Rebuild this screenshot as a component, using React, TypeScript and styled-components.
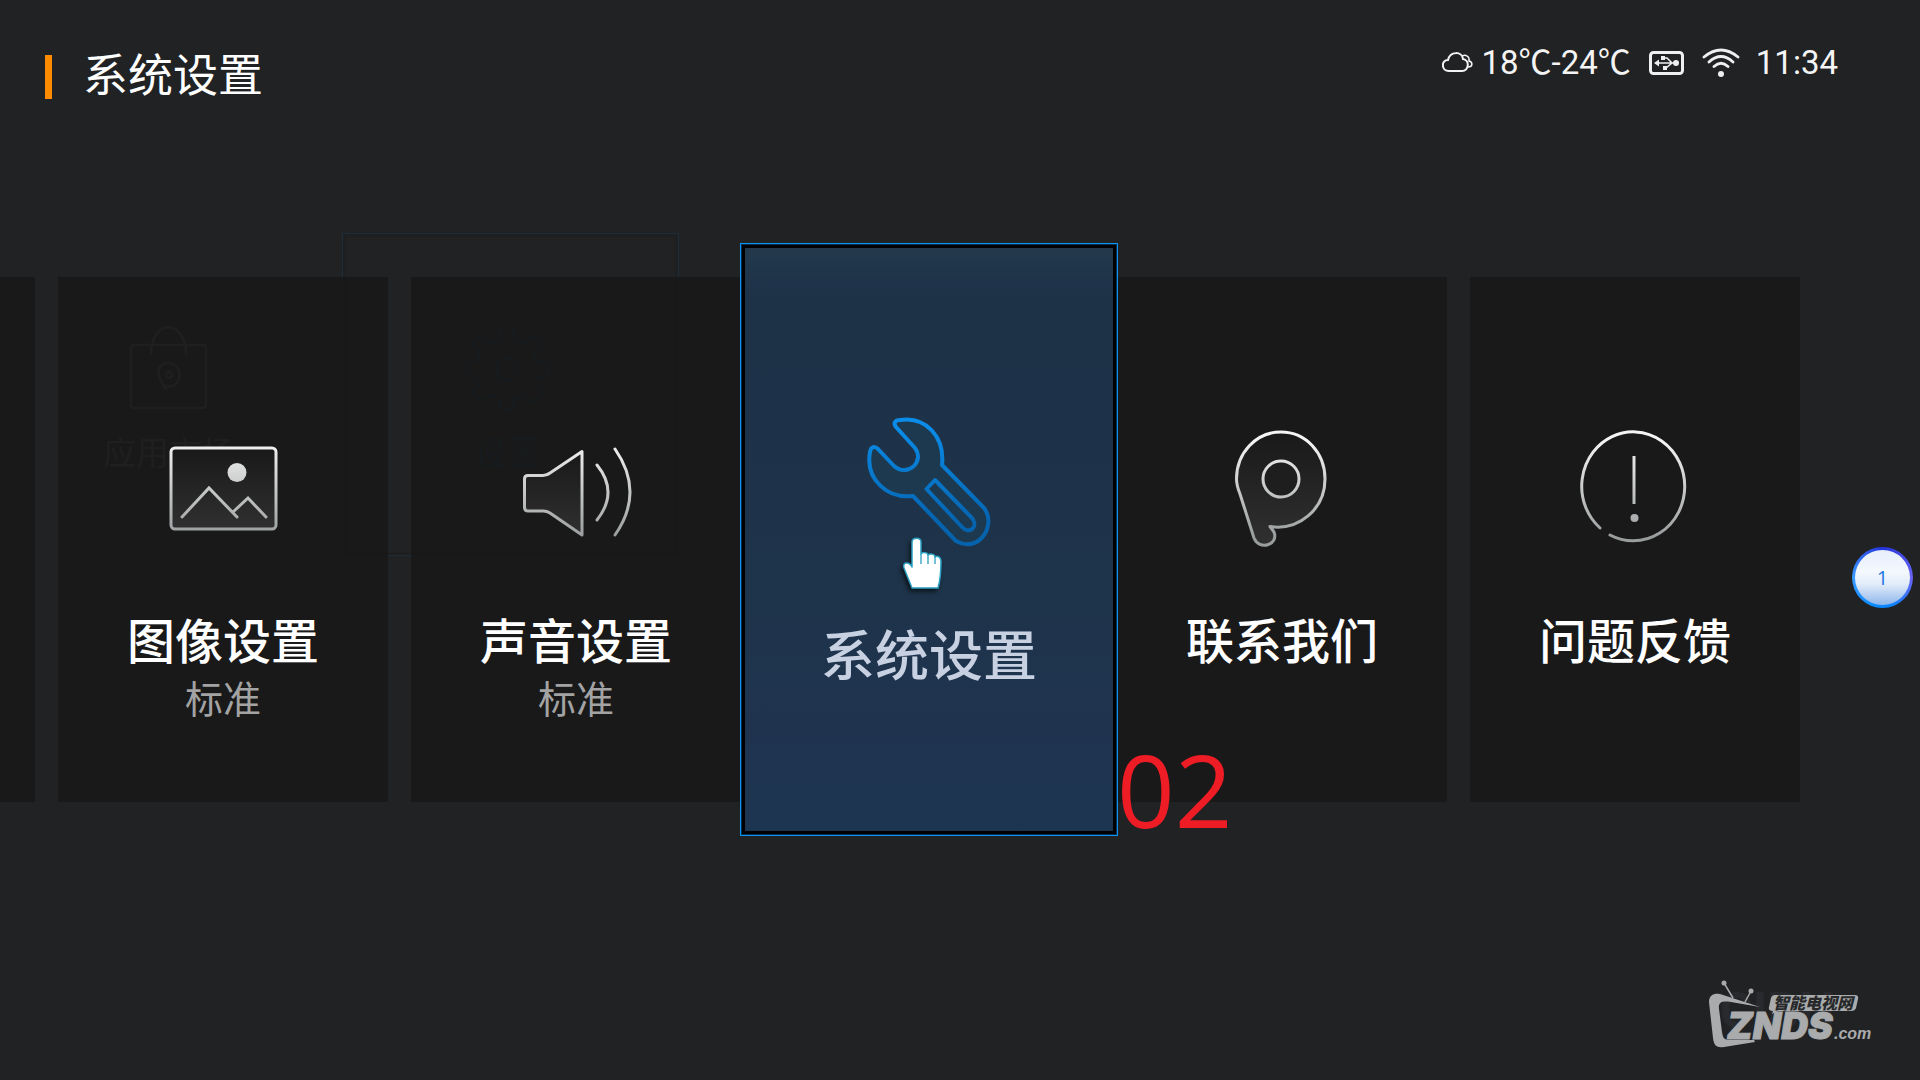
import React from "react";
import styled, { createGlobalStyle } from "styled-components";

const GlobalStyle = createGlobalStyle`
  *, *::before, *::after { box-sizing: border-box; }
  body {
    margin: 0;
    background: #212224;
    color: #fff;
    font-family: Roboto, "Noto Sans CJK SC", sans-serif;
  }
  button { font: inherit; color: inherit; }
`;

const Screen = styled.main`
  position: relative;
  display: flex;
  flex-direction: column;
  min-height: 100vh;
  overflow: hidden;
  background: #212224;
`;

const Header = styled.header`
  display: flex;
  justify-content: space-between;
  align-items: flex-start;
  padding: 45px 82px 0 45px;
  height: 243px;
`;

const Heading = styled.h1`
  display: flex;
  align-items: center;
  gap: 31px;
  margin: 0;
  font-size: 45px;
  font-weight: 400;
  line-height: 64px;

  &::before {
    content: "";
    width: 7px;
    height: 44px;
    background: #ff8c00;
  }
`;

const Status = styled.div`
  display: flex;
  align-items: center;
  font-size: 33px;
  line-height: 36px;
  color: #f4f4f4;
`;

const Weather = styled.div`
  display: flex;
  align-items: center;
  gap: 8px;
  margin-right: 18px;
`;

const UsbSlot = styled.span`
  display: flex;
  margin-right: 18px;
`;

const WifiSlot = styled.span`
  display: flex;
  margin-right: 16px;
`;

const Carousel = styled.nav`
  position: relative;
  display: flex;
  justify-content: flex-end;
  align-items: center;
  gap: 23px;
  padding-right: 120px;
`;

const Tile = styled.button`
  position: relative;
  display: flex;
  flex: none;
  flex-direction: column;
  align-items: center;
  width: 330px;
  height: 525px;
  padding: 144px 0 0;
  border: 0;
  background: rgba(24, 24, 24, 0.94);
`;

const IconBox = styled.span`
  display: flex;
  align-items: center;
  justify-content: center;
  height: 136px;
  margin-bottom: 56px;
`;

const FocusedTile = styled(Tile)`
  z-index: 1;
  width: 378px;
  height: 593px;
  margin: 0 -24px;
  padding: 172px 0 0;
  border: 1px solid #0a93f5;
  background: linear-gradient(#243a4b 0, #20364b 20px, #1d3147 60px, #1e344a 350px, #1f334f 490px, #1c3550 100%);
  box-shadow: inset 0 0 0 1px #06304f, inset 0 0 0 4px #000;

  ${IconBox} {
    margin-bottom: 76px;
  }
`;

const Label = styled.span<{ $focused?: boolean }>`
  font-size: ${(p) => (p.$focused ? "54px" : "48px")};
  font-weight: 500;
  line-height: 60px;
  color: ${(p) => (p.$focused ? "#c8d1e2" : "#fff")};
`;

const Value = styled.span`
  font-size: 38px;
  line-height: 54px;
  color: #a3a3a3;
`;

const Ghost = styled.div`
  position: absolute;
  top: -10px;
  left: 342px;
  width: 337px;
  height: 323px;
  border: 1px solid #1c2e3b;
  box-shadow: inset 0 0 0 3px #1e1f21;
`;

const GhostItem = styled.div<{ $left: number; $tint: string }>`
  position: absolute;
  top: 83px;
  left: ${(p) => p.$left}px;
  display: flex;
  flex-direction: column;
  align-items: center;
  gap: 20px;
  width: 140px;
  font-size: 33px;
  line-height: 48px;
  color: ${(p) => p.$tint};
`;

const Pointer = styled.svg`
  position: absolute;
  z-index: 2;
  top: 534px;
  left: 898px;
  filter: drop-shadow(-2px 3px 2px rgba(0, 0, 0, 0.6));
`;

const StepNumber = styled.strong`
  position: absolute;
  z-index: 2;
  top: 719px;
  left: 1117px;
  font-family: "Open Sans", "Noto Sans", sans-serif;
  font-size: 101px;
  font-weight: 400;
  line-height: 140px;
  color: #ee1c25;
`;

const FloatingBadge = styled.button`
  position: absolute;
  top: 547px;
  right: 7px;
  display: grid;
  place-items: center;
  width: 61px;
  height: 61px;
  padding: 0;
  border: 3px solid transparent;
  border-radius: 50%;
  background:
    linear-gradient(#e6effc 0, #f4f8fe 40%, #e2ecfa 62%, #8fb6ea 100%) padding-box,
    conic-gradient(#2334dc 0, #6a63f2 25%, #0b84ff 45%, #0b8cff 55%, #3a9bff 75%, #2334dc 100%) border-box;
  font-family: "Open Sans", sans-serif;
  font-size: 20px;
  line-height: 28px;
  color: #2478e4;
`;

const Watermark = styled.div`
  position: absolute;
  right: 40px;
  bottom: 24px;
  display: flex;
`;

const Metal = ({ id, from = "#f4f4f4", to = "#9a9d9e" }: { id: string; from?: string; to?: string }) => (
  <defs>
    <linearGradient id={id} x1="0" y1="0" x2="0" y2="120" gradientUnits="userSpaceOnUse">
      <stop offset="0.1" stopColor={from} />
      <stop offset="0.9" stopColor={to} />
    </linearGradient>
    <linearGradient id={id + "-fill"} x1="0" y1="0" x2="0" y2="1">
      <stop offset="0" stopColor="#191919" />
      <stop offset="1" stopColor="#303030" />
    </linearGradient>
  </defs>
);

const PictureIcon = () => (
  <svg width="120" height="120" viewBox="0 0 120 120" fill="none" stroke="url(#pic)" strokeWidth="3" strokeLinecap="round">
    <Metal id="pic" />
    <rect x="8" y="19" width="105" height="81" rx="4" fill="url(#pic-fill)" />
    <circle cx="74" cy="43.5" r="9.5" fill="url(#pic)" stroke="none" />
    <path d="M19 88L46 59L74 88M70 83L85 69L103 88" />
  </svg>
);

const SoundIcon = () => (
  <svg width="120" height="120" viewBox="0 0 120 120" fill="none" stroke="url(#snd)" strokeWidth="3" strokeLinecap="round" strokeLinejoin="round">
    <Metal id="snd" />
    <path d="M12 46.5H27Q31 46.5 34 44L66 22.5V106L34 84Q31 82 27 82H12Q8.5 82 8.5 78V50Q8.5 46.5 12 46.5Z" fill="url(#snd-fill)" />
    <path d="M81 36Q103 63 81 91M99 20Q129 63 99 106" />
  </svg>
);

const WrenchIcon = () => (
  <svg width="126" height="136" viewBox="0 0 126 136" fill="none" stroke="url(#wr)" strokeWidth="4" strokeLinejoin="round">
    <Metal id="wr" from="#0a8ce8" to="#0563ae" />
    <path d="M30 11C27 7 29 4 34 4C60 0 79 21 76 49L118 92C131 109 113 138 90 125L47 80C22 83 -1 64 4 36C5 30 9 30 12 33L28 50C42 62 59 45 49 32Z" fill="#1c394f" />
    <path d="M60.5 73L69 64L106 102C113 111 103 119 96 111Z" />
  </svg>
);

const ContactIcon = () => (
  <svg width="120" height="120" viewBox="0 0 120 120" fill="none" stroke="url(#con)" strokeWidth="3" strokeLinejoin="round">
    <Metal id="con" />
    <path d="M48 97.5C77 102 103 80 103 50C103 24 84 3 59 3C34 3 14.5 24 14.5 50C14.5 55 16 60 18 65L32 109C37 122 57 116 52 103Z" fill="url(#con-fill)" />
    <circle cx="59" cy="50" r="18" fill="#1e1e1e" />
  </svg>
);

const FeedbackIcon = () => (
  <svg width="120" height="120" viewBox="0 0 120 120" fill="none" stroke="url(#fb)" strokeWidth="3" strokeLinecap="round">
    <Metal id="fb" />
    <path d="M25 99A51.5 54.5 0 1 1 35 106" />
    <path d="M57.5 27H60.5V75H57.5Z" fill="url(#fb)" stroke="none" />
    <circle cx="59.5" cy="89" r="4" fill="url(#fb)" stroke="none" />
  </svg>
);

const CloudIcon = () => (
  <svg width="32" height="22" viewBox="0 0 32 22" fill="none" stroke="#f4f4f4" strokeWidth="2">
    <path d="M7 19C-1 19 -1 8 6 8C8 -1 20 -1 21 7C28 8 27 19 20 19Z" />
    <path d="M20 4C24 2 28 5 27 9C31 10 31 15 26 15" strokeWidth="1.5" />
  </svg>
);

const UsbIcon = () => (
  <svg width="35" height="24" viewBox="0 0 35 24" fill="none" stroke="#efefef" strokeWidth="2">
    <rect x="1.5" y="1.5" width="32" height="21" rx="3" strokeWidth="3" />
    <path d="M9 12H27M14 7H18L23 12L17 17" strokeWidth="1.6" />
    <path d="M5 12L10 8.5V15.5Z" fill="#efefef" stroke="none" />
    <circle cx="27" cy="12" r="3" fill="#efefef" stroke="none" />
    <path d="M12 5H16V9H12ZM14 15H18V19H14Z" fill="#efefef" stroke="none" />
  </svg>
);

const WifiIcon = () => (
  <svg width="38" height="30" viewBox="0 0 38 30" fill="none" stroke="#efefef" strokeWidth="2.8" strokeLinecap="round">
    <path d="M2 9Q19 -5 36 9M7 14Q19 3 31 14M12 18.5Q19 12 26 18.5" />
    <circle cx="19" cy="26" r="3" fill="#efefef" stroke="none" />
  </svg>
);

const BagIcon = () => (
  <svg width="80" height="84" viewBox="0 0 80 84" fill="none" stroke="currentColor" strokeWidth="2.5">
    <rect x="2" y="19" width="75" height="63" rx="3" />
    <path d="M22 29C22 -8 57 -8 57 29M37 64L31 53C22 32 54 32 50 52C48 61 42 61 37 60Z" />
    <circle cx="40" cy="49" r="3" />
  </svg>
);

const GearIcon = () => (
  <svg width="86" height="84" viewBox="0 0 86 84" fill="none" stroke="currentColor" strokeWidth="2">
    <path d="M36 2H50V13L60 17L69 9L78 18L70 27L74 36H84V50H74L70 58L78 67L69 76L60 69L50 73V83H36V73L26 69L17 76L8 67L16 58L12 50H2V36H12L16 27L8 18L17 9L26 17L36 13Z" />
    <circle cx="43" cy="43" r="11" />
  </svg>
);

const ZndsLogo = () => (
  <svg width="172" height="76" viewBox="0 0 172 76" fill="#a9abac">
    <text x="12" y="48" fontFamily="Roboto, sans-serif" fontSize="50" fontWeight="700" fill="#282a2d">CIBN</text>
    <path d="M52 27L12 14C6 13 1 15 1 22L5 58C6 66 9 68 16 67L47 62L46 60L22 60C16 60 15 58 14 52L11 29C10 22 14 21 20 21.5Z" />
    <path d="M16 3L25 18M43 11L37 22" stroke="#a9abac" strokeWidth="1.5" />
    <circle cx="16" cy="3" r="2.5" />
    <circle cx="43" cy="11" r="2.5" />
    <path d="M67 15H147Q151 15 150 19L148 28Q147 31 143 31H70L64 34L65 31Q60 31 61 27L63 18Q64 15 67 15Z" />
    <text x="65" y="29" fontFamily="'Noto Sans CJK SC', sans-serif" fontSize="16" fontWeight="900" fontStyle="italic" fill="#27282a">智能电视网</text>
    <text x="19" y="59" fontFamily="Inter, sans-serif" fontSize="37" fontWeight="900" fontStyle="italic" stroke="#a9abac" strokeWidth="1">ZNDS</text>
    <text x="126" y="59" fontFamily="'Liberation Sans', sans-serif" fontSize="16" fontWeight="700" fontStyle="italic">.com</text>
  </svg>
);

const HandPointer = () => (
  <Pointer width="48" height="58" viewBox="0 0 48 58" aria-hidden="true">
    <path
      d="M14 54L6 34C4 28 11 27 14 33V8C14 3 23 3 23 8V20C24 18 30 18 30 21C32 19 37 20 37 23C39 21 43 23 43 27C43 37 43 44 40 54Z"
      fill="#fff"
      stroke="#2b9fc0"
      strokeWidth="1.5"
      strokeLinejoin="round"
    />
    <path d="M23 20V30M30 21V30M37 23V30" stroke="#2b9fc0" strokeWidth="1.3" />
  </Pointer>
);

const tiles = [
  { label: "", value: "", icon: null },
  { label: "图像设置", value: "标准", icon: <PictureIcon /> },
  { label: "声音设置", value: "标准", icon: <SoundIcon /> },
  { label: "系统设置", value: "", icon: <WrenchIcon />, focused: true },
  { label: "联系我们", value: "", icon: <ContactIcon /> },
  { label: "问题反馈", value: "", icon: <FeedbackIcon /> },
];

export default function App() {
  return (
    <Screen>
      <GlobalStyle />
      <Header>
        <Heading>系统设置</Heading>
        <Status>
          <Weather>
            <CloudIcon />
            <span>18℃-24℃</span>
          </Weather>
          <UsbSlot><UsbIcon /></UsbSlot>
          <WifiSlot><WifiIcon /></WifiSlot>
          <time>11:34</time>
        </Status>
      </Header>
      <Carousel aria-label="系统设置">
        <Ghost />
        <GhostItem $left={99} $tint="#8c8c8c" aria-hidden="true">
          <BagIcon />
          <span>应用市场</span>
        </GhostItem>
        <GhostItem $left={437} $tint="#084a78" aria-hidden="true">
          <GearIcon />
          <span>设置</span>
        </GhostItem>
        {tiles.map((tile, i) => {
          const Box = tile.focused ? FocusedTile : Tile;
          return (
            <Box key={i} type="button">
              <IconBox>{tile.icon}</IconBox>
              <Label $focused={tile.focused}>{tile.label}</Label>
              {tile.value && <Value>{tile.value}</Value>}
            </Box>
          );
        })}
      </Carousel>
      <HandPointer />
      <StepNumber>02</StepNumber>
      <FloatingBadge type="button">1</FloatingBadge>
      <Watermark><ZndsLogo /></Watermark>
    </Screen>
  );
}
